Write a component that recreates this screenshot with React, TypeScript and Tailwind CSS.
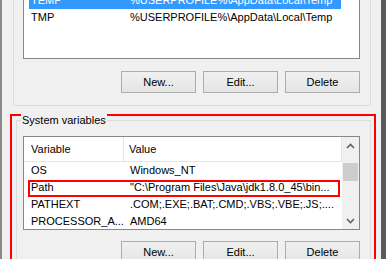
import React from "react";

const userVars = [
  { name: "TEMP", value: "%USERPROFILE%\\AppData\\Local\\Temp", selected: true },
  { name: "TMP", value: "%USERPROFILE%\\AppData\\Local\\Temp", selected: false },
];

const systemVars = [
  { name: "OS", value: "Windows_NT", marked: false },
  { name: "Path", value: "\"C:\\Program Files\\Java\\jdk1.8.0_45\\bin...", marked: true },
  { name: "PATHEXT", value: ".COM;.EXE;.BAT;.CMD;.VBS;.VBE;.JS;....", marked: false },
  { name: "PROCESSOR_A...", value: "AMD64", marked: false },
];

const WinButton: React.FC<{ label: string }> = ({ label }) => (
  <button className="w-[75px] h-[22px] border border-[#acacac] bg-gradient-to-b from-[#f0f0f0] to-[#e5e5e5] flex items-center justify-center leading-none">
    {label}
  </button>
);

const ButtonRow: React.FC = () => (
  <div className="flex justify-end gap-[7px] w-[337px] ml-[6px]">
    <WinButton label="New..." />
    <WinButton label="Edit..." />
    <WinButton label="Delete" />
  </div>
);

const Chevron: React.FC<{ up?: boolean }> = ({ up }) => (
  <svg width="9" height="6" viewBox="0 0 9 6" className="block">
    <path
      d={up ? "M1 5 L4.5 1.5 L8 5" : "M1 1 L4.5 4.5 L8 1"}
      fill="none"
      stroke="#606060"
      strokeWidth="1.6"
    />
  </svg>
);

const App: React.FC = () => {
  return (
    <div className="w-[386px] h-[259px] overflow-hidden bg-[#f0f0f0] flex text-[11px] text-black font-['Segoe_UI','Liberation_Sans',sans-serif]">
      {/* left window edge */}
      <div className="w-[2px] shrink-0 bg-[#8a8a8a]" />

      <div className="w-[379px] shrink-0">
        {/* User variables group (cut at top) */}
        <div className="mt-[-31px] ml-[11px] w-[358px] h-[137px] border border-[#dcdcdc]">
          <div className="mt-[9px] ml-[9px] w-[337px] h-[80px] border border-[#828790] bg-white pt-[12px]">
            {userVars.map((v) => (
              <div
                key={v.name}
                className={`flex h-[17px] items-center ml-[5px] w-[312px] ${
                  v.selected ? "bg-[#3399ff] text-white" : ""
                }`}
              >
                <div className="w-[101px] pl-[2px]">{v.name}</div>
                <div className="whitespace-nowrap">{v.value}</div>
              </div>
            ))}
          </div>
          <div className="mt-[12px]">
            <div className="flex justify-end gap-[7px] w-[337px] ml-[9px]">
              <WinButton label="New..." />
              <WinButton label="Edit..." />
              <WinButton label="Delete" />
            </div>
          </div>
        </div>

        {/* System variables, highlighted */}
        <div className="mt-[8px] ml-[8px] w-[366px] h-[200px] border-2 border-[#ff0000]">
          <div className="relative mt-[4px] ml-[4px] w-[355px] h-[190px] border border-[#dcdcdc]">
            <span className="absolute top-[-9px] left-[4px] px-[1px] bg-[#f0f0f0] leading-[16px]">
              System variables
            </span>

            <div className="mt-[15px] ml-[6px] w-[337px] h-[94px] border border-[#828790] bg-white flex overflow-hidden">
              <div className="w-[318px]">
                {/* header */}
                <div className="flex h-[25px] items-center border-b border-[#e5e5e5]">
                  <div className="w-[100px] h-full flex items-center pl-[7px] border-r border-[#e5e5e5]">
                    Variable
                  </div>
                  <div className="flex-1 h-full flex items-center pl-[5px] border-r border-[#e5e5e5]">
                    Value
                  </div>
                </div>
                {systemVars.map((v) => (
                  <div key={v.name} className="relative flex h-[17px] items-center">
                    <div className="w-[100px] pl-[7px] whitespace-nowrap">{v.name}</div>
                    <div className="pl-[6px] whitespace-nowrap">{v.value}</div>
                    {v.marked && (
                      <div className="absolute top-[1px] left-[4px] w-[312px] h-[17px] border-2 border-[#ff0000]" />
                    )}
                  </div>
                ))}
              </div>

              {/* scrollbar */}
              <div className="w-[17px] bg-[#f0f0f0] flex flex-col">
                <div className="h-[17px] flex items-center justify-center">
                  <Chevron up />
                </div>
                <div className="h-[9px]" />
                <div className="h-[18px] mx-[1px] bg-[#cdcdcd]" />
                <div className="flex-1" />
                <div className="h-[17px] flex items-center justify-center">
                  <Chevron />
                </div>
              </div>
            </div>

            <div className="mt-[11px]">
              <ButtonRow />
            </div>
          </div>
        </div>
      </div>

      {/* right window edge */}
      <div className="flex-1 bg-[#5a5a5a]" />
    </div>
  );
};

export default App;
